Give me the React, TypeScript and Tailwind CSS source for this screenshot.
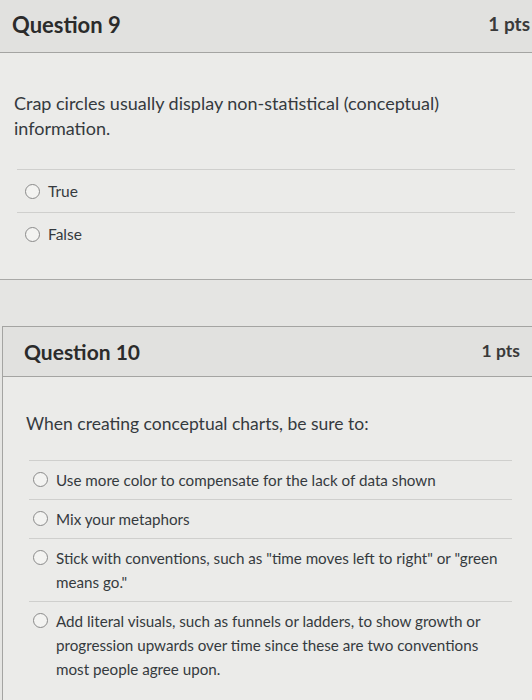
import { FC } from "react";

interface RadioOptionProps {
  label: string;
  className?: string;
}

const Radio: FC = () => (
  <span className="mt-[4px] h-[15px] w-[15px] shrink-0 rounded-full border-[1.5px] border-[#8a8a8a] bg-[#f3f3f1]" />
);

const Q9Option: FC<RadioOptionProps> = ({ label }) => (
  <div className="flex items-start gap-[8px] px-[8px] py-[10px] min-h-[42px]">
    <Radio />
    <span className="leading-[22px]">{label}</span>
  </div>
);

const Q10Option: FC<RadioOptionProps> = ({ label }) => (
  <div className="flex items-start gap-[8px] px-[4px] py-[7px]">
    <Radio />
    <span className="max-w-[446px] leading-[24px]">{label}</span>
  </div>
);

const App: FC = () => {
  return (
    <div
      className="h-[700px] w-[532px] overflow-hidden bg-[#e5e5e3] text-[#353a3e]"
      style={{ fontFamily: "Lato, 'Open Sans', sans-serif" }}
    >
      {/* Question 9 */}
      <div className="border-b border-[#a9a9a7] bg-[#ebebe9]">
        <div className="flex h-[53px] items-center justify-between border-b border-[#a4a4a2] bg-[#e1e1df] pb-[3px] pl-[12px] pr-[2px]">
          <span className="text-[22px] font-bold text-[#2b2b2b]">Question 9</span>
          <span className="text-[19px] font-bold text-[#3a3a3a]">1 pts</span>
        </div>
        <div className="pt-[38px] pb-[24px]">
          <p className="max-w-[480px] pl-[14px] text-[18px] leading-[25px]">
            Crap circles usually display non-statistical (conceptual) information.
          </p>
          <div className="mx-[17px] mt-[28px] border-t border-[#cfcfcd] text-[15.5px]">
            <Q9Option label="True" />
            <div className="border-t border-[#cfcfcd]" />
            <Q9Option label="False" />
          </div>
        </div>
      </div>

      <div className="h-[46px]" />

      {/* Question 10 */}
      <div className="ml-[2px] h-full border-l border-t border-[#a4a4a2] bg-[#ebebe9]">
        <div className="flex h-[50px] items-center justify-between border-b border-[#a4a4a2] bg-[#e1e1df] pl-[21px] pr-[12px]">
          <span className="text-[21px] font-bold text-[#2b2b2b]">Question 10</span>
          <span className="text-[17.5px] font-bold text-[#3a3a3a]">1 pts</span>
        </div>
        <div className="pt-[35px]">
          <p className="pl-[23px] text-[17.5px] leading-[24px]">
            When creating conceptual charts, be sure to:
          </p>
          <div className="ml-[26px] mr-[20px] mt-[24px] border-t border-[#cfcfcd] text-[15.2px]">
            <Q10Option label="Use more color to compensate for the lack of data shown" />
            <div className="border-t border-[#cfcfcd]" />
            <Q10Option label="Mix your metaphors" />
            <div className="border-t border-[#cfcfcd]" />
            <Q10Option label={'Stick with conventions, such as "time moves left to right" or "green means go."'} />
            <div className="border-t border-[#cfcfcd]" />
            <Q10Option label="Add literal visuals, such as funnels or ladders, to show growth or progression upwards over time since these are two conventions most people agree upon." />
          </div>
        </div>
      </div>
    </div>
  );
};

export default App;
